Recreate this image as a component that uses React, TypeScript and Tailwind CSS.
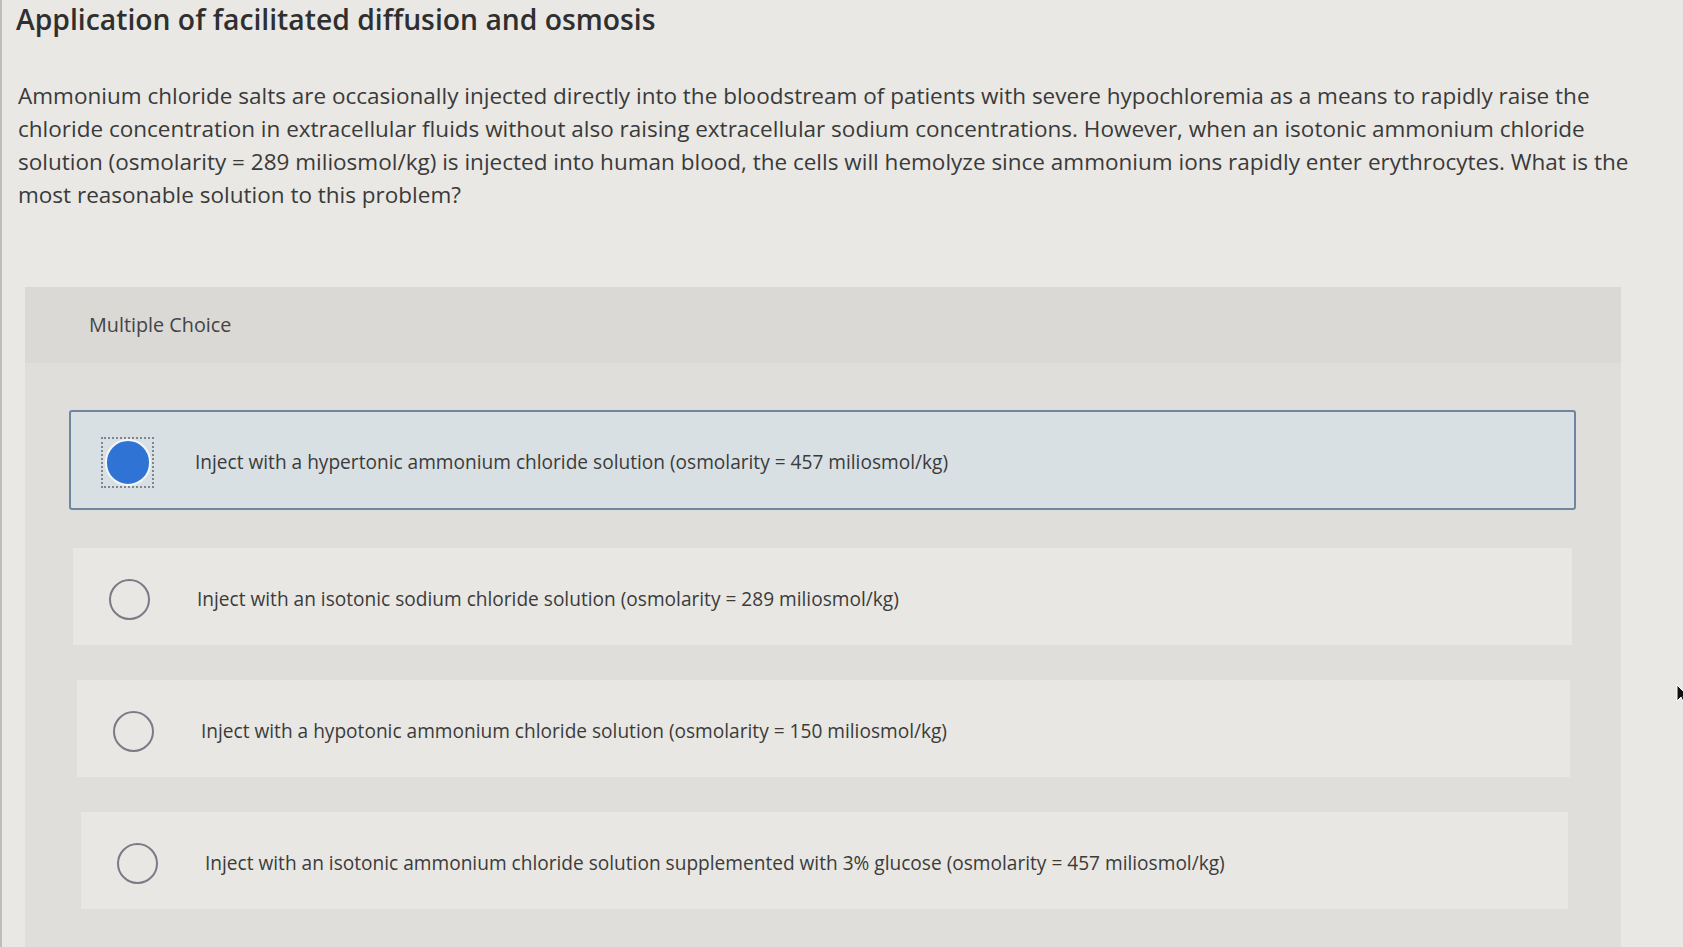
import React from "react";

const options = [
  {
    text: "Inject with a hypertonic ammonium chloride solution (osmolarity = 457 miliosmol/kg)",
    selected: true,
    cls: "ml-[44px] mr-[45px] mb-[38px]",
  },
  {
    text: "Inject with an isotonic sodium chloride solution (osmolarity = 289 miliosmol/kg)",
    selected: false,
    cls: "ml-[48px] mr-[49px] mb-[35px]",
  },
  {
    text: "Inject with a hypotonic ammonium chloride solution (osmolarity = 150 miliosmol/kg)",
    selected: false,
    cls: "ml-[52px] mr-[51px] mb-[35px]",
  },
  {
    text: "Inject with an isotonic ammonium chloride solution supplemented with 3% glucose (osmolarity = 457 miliosmol/kg)",
    selected: false,
    cls: "ml-[56px] mr-[53px]",
  },
];

function Radio({ selected }: { selected: boolean }) {
  if (selected) {
    return (
      <div className="w-[53px] h-[51px] border-2 border-dotted border-[#7d8793] flex items-center justify-center">
        <div className="w-[46px] h-[47px] rounded-full bg-[#2f74d4] border-2 border-[#f4f6f8]" />
      </div>
    );
  }
  return (
    <div className="w-[53px] h-[51px] flex items-center justify-center">
      <div className="w-[41px] h-[41px] rounded-full border-2 border-[#7b7a86]" />
    </div>
  );
}

export default function App() {
  return (
    <div
      className="relative min-h-[947px] w-full bg-[#e9e8e4] border-l-2 border-[#bebdb9] overflow-hidden text-[#383838]"
      style={{ fontFamily: "'Open Sans', Lato, sans-serif" }}
    >
      <div className="pl-[14px]">
        <h1 className="text-[28.3px] leading-[38px] font-semibold text-[#2f2f2f] whitespace-nowrap">
          Application of facilitated diffusion and osmosis
        </h1>
        <p className="mt-[41px] pl-[2px] text-[22.5px] leading-[33px] text-[#3a3a3a] whitespace-nowrap">
          Ammonium chloride salts are occasionally injected directly into the bloodstream of patients with severe hypochloremia as a means to rapidly raise the
          <br />
          chloride concentration in extracellular fluids without also raising extracellular sodium concentrations. However, when an isotonic ammonium chloride
          <br />
          solution (osmolarity = 289 miliosmol/kg) is injected into human blood, the cells will hemolyze since ammonium ions rapidly enter erythrocytes. What is the
          <br />
          most reasonable solution to this problem?
        </p>
      </div>

      <div className="mt-[76px] ml-[23px] mr-[62px] bg-[#dfdeda] pb-[40px]">
        <div className="h-[76px] bg-[#dad9d5] flex items-center pl-[64px]">
          <span className="text-[19.8px] text-[#444444]">Multiple Choice</span>
        </div>
        <div className="pt-[47px] flex flex-col">
          {options.map((o, i) => (
            <div
              key={i}
              className={
                (o.selected
                  ? "bg-[#d9e0e3] border-2 border-[#6f86a0] rounded-[3px] h-[100px]"
                  : "bg-[#e8e7e3] h-[97px]") +
                " " +
                o.cls +
                " flex items-center pl-[30px] pt-[5px]"
              }
            >
              <Radio selected={o.selected} />
              <span className="ml-[41px] text-[19.1px] text-[#3b3b3b] whitespace-nowrap">{o.text}</span>
            </div>
          ))}
        </div>
      </div>

      <svg
        className="absolute left-[1674px] top-[684px]"
        width="14"
        height="22"
        viewBox="0 0 14 22"
      >
        <path d="M1 1 L1 17 L5 13 L8 20 L10 19 L7 12 L12 12 Z" fill="#111" stroke="#fff" strokeWidth="1" />
      </svg>
    </div>
  );
}
